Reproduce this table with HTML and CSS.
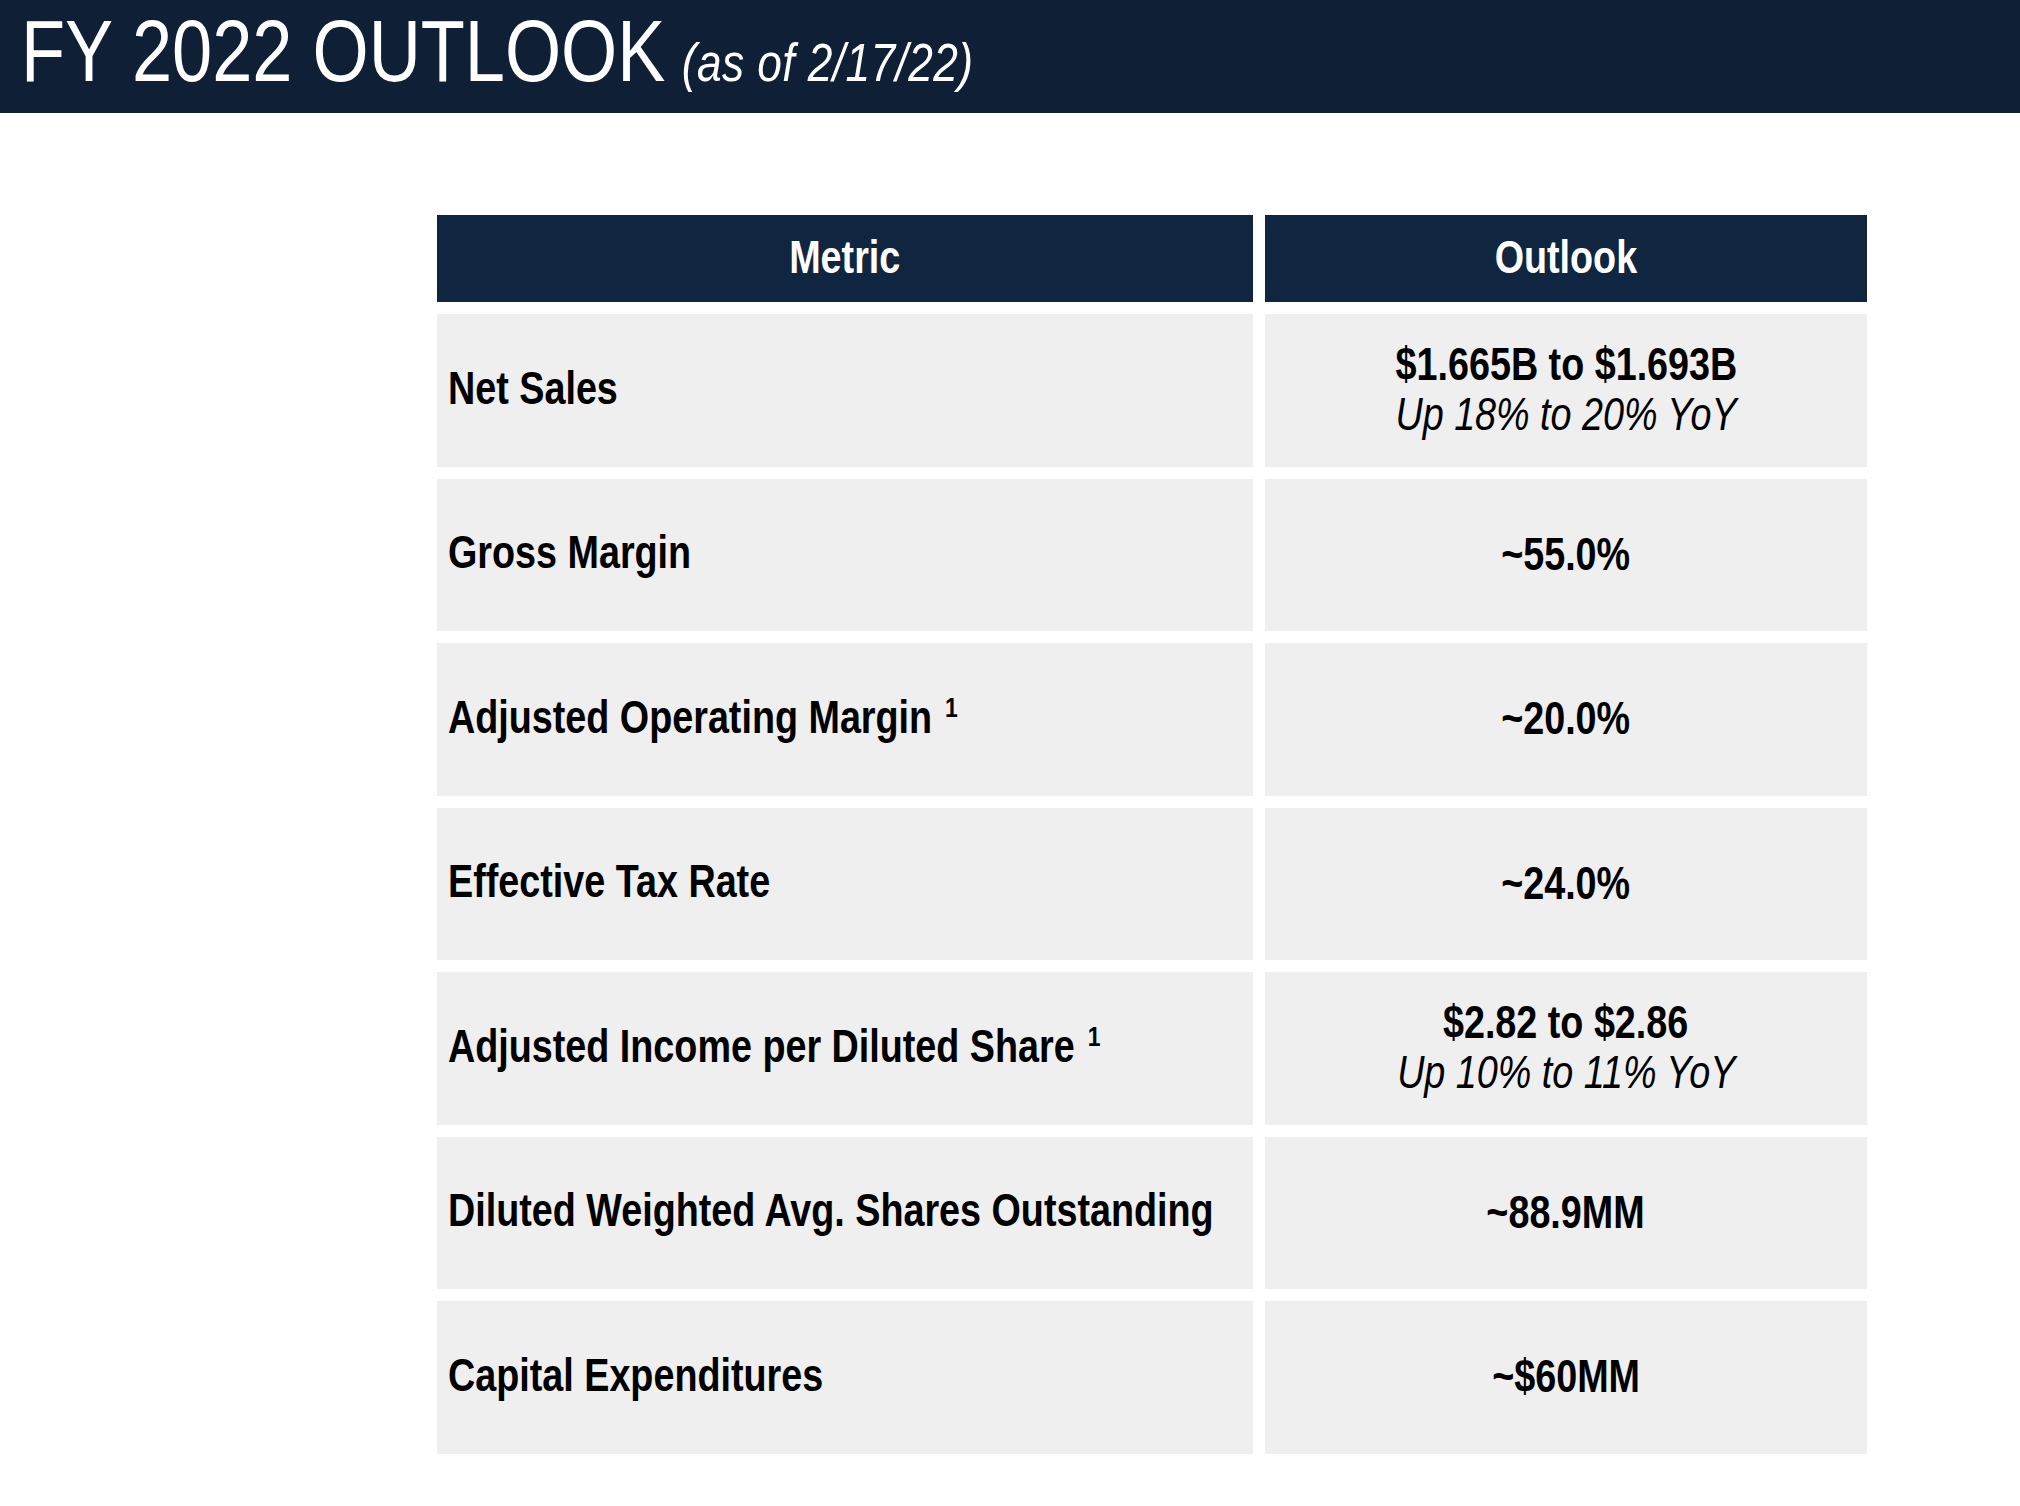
FILE: index.html
```html
<!DOCTYPE html>
<html lang="en">
<head>
<meta charset="utf-8">
<title>FY 2022 Outlook</title>
<link rel="stylesheet" href="styles.css">
</head>
<body>
<header class="title-bar">
  <h1 class="title">FY 2022 OUTLOOK <span class="subtitle">(as of 2/17/22)</span></h1>
</header>
<main class="content">
  <div class="outlook-table">
    <div class="th"><span class="narrow">Metric</span></div>
    <div class="th"><span class="narrow">Outlook</span></div>

    <div class="cell metric"><span class="narrow label">Net Sales</span></div>
    <div class="cell value"><span class="narrow main">$1.665B to $1.693B</span><span class="narrow sub">Up 18% to 20% YoY</span></div>

    <div class="cell metric"><span class="narrow label">Gross Margin</span></div>
    <div class="cell value"><span class="narrow main">~55.0%</span></div>

    <div class="cell metric"><span class="narrow label">Adjusted Operating Margin <sup class="note">1</sup></span></div>
    <div class="cell value"><span class="narrow main">~20.0%</span></div>

    <div class="cell metric"><span class="narrow label">Effective Tax Rate</span></div>
    <div class="cell value"><span class="narrow main">~24.0%</span></div>

    <div class="cell metric"><span class="narrow label">Adjusted Income per Diluted Share <sup class="note">1</sup></span></div>
    <div class="cell value"><span class="narrow main">$2.82 to $2.86</span><span class="narrow sub">Up 10% to 11% YoY</span></div>

    <div class="cell metric"><span class="narrow label">Diluted Weighted Avg. Shares Outstanding</span></div>
    <div class="cell value"><span class="narrow main">~88.9MM</span></div>

    <div class="cell metric"><span class="narrow label">Capital Expenditures</span></div>
    <div class="cell value"><span class="narrow main">~$60MM</span></div>
  </div>
</main>
</body>
</html>
```

FILE: styles.css
```css
html, body {
  margin: 0;
  padding: 0;
  background: #ffffff;
}

body {
  width: 2020px;
  min-height: 1506px;
  font-family: "Liberation Sans", Arial, sans-serif;
  color: #000000;
}

/* Arial Narrow look: Liberation Sans squeezed horizontally */
.narrow {
  display: inline-block;
  white-space: nowrap;
  transform: scaleX(0.82);
  transform-origin: center;
}

.title-bar {
  height: 113px;
  background: #0e1f36;
  box-sizing: border-box;
  padding: 7px 0 0 21px;
}

.title {
  margin: 0;
  display: inline-flex;
  align-items: baseline;
  font-weight: 400;
  font-size: 88px;
  line-height: 87px;
  color: #ffffff;
  white-space: nowrap;
  transform: scaleX(0.82);
  transform-origin: left center;
}

.subtitle {
  margin-left: 20px;
  font-size: 54px;
  font-style: italic;
  letter-spacing: 0.5px;
}

.content {
  padding: 102px 0 0 437px;
}

.outlook-table {
  display: grid;
  grid-template-columns: 816px 602px;
  grid-template-rows: 87px repeat(7, 152.5px);
  column-gap: 12px;
  row-gap: 12px;
}

.th {
  background: #0f2540;
  color: #ffffff;
  font-weight: 700;
  font-size: 46px;
  display: flex;
  align-items: center;
  justify-content: center;
  padding-bottom: 4px;
}

.cell {
  background: #efefef;
  font-size: 46px;
  font-weight: 700;
  display: flex;
}

.metric {
  align-items: center;
  padding-left: 11px;
  padding-bottom: 5px;
}

.metric .label {
  transform-origin: left center;
}

.note {
  font-size: 28px;
  line-height: 0;
  vertical-align: 16px;
  margin-left: 3px;
}

.value {
  flex-direction: column;
  align-items: center;
  justify-content: center;
  text-align: center;
  padding-bottom: 2px;
}

.value .main {
  line-height: 50px;
}

.value .sub {
  line-height: 50px;
  font-weight: 400;
  font-style: italic;
}
```
